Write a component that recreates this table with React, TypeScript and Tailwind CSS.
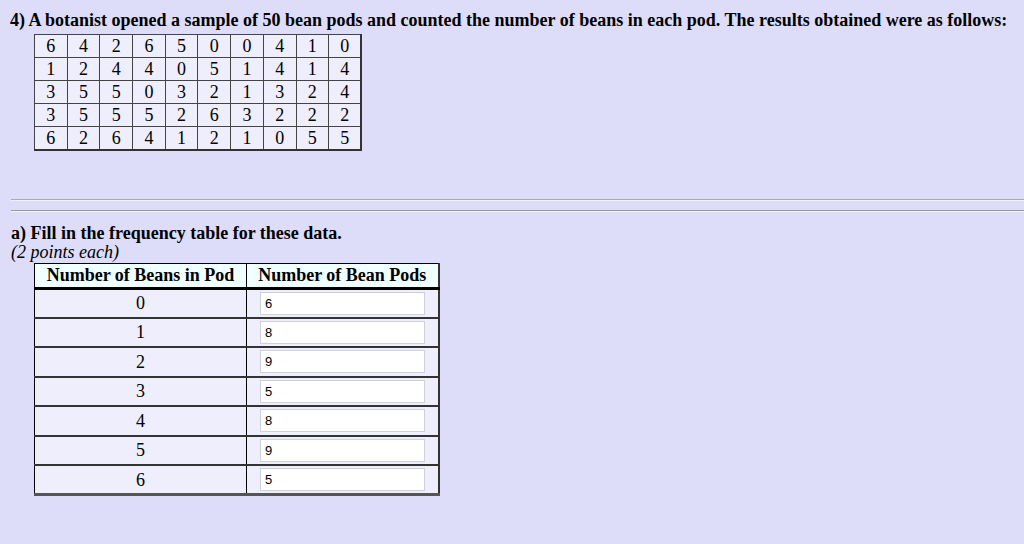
const data = [
  [6, 4, 2, 6, 5, 0, 0, 4, 1, 0],
  [1, 2, 4, 4, 0, 5, 1, 4, 1, 4],
  [3, 5, 5, 0, 3, 2, 1, 3, 2, 4],
  [3, 5, 5, 5, 2, 6, 3, 2, 2, 2],
  [6, 2, 6, 4, 1, 2, 1, 0, 5, 5],
];

const freq = [
  { beans: 0, pods: "6" },
  { beans: 1, pods: "8" },
  { beans: 2, pods: "9" },
  { beans: 3, pods: "5" },
  { beans: 4, pods: "8" },
  { beans: 5, pods: "9" },
  { beans: 6, pods: "5" },
];

export default function App() {
  return (
    <div className="h-[544px] w-[1024px] overflow-hidden bg-[#DDDDFA] text-black font-['Liberation_Serif',serif]">
      <div className="pl-[10px] pt-[10px] text-[18px] font-bold leading-[20px] whitespace-nowrap">
        4) A botanist opened a sample of 50 bean pods and counted the number of beans in each pod. The results obtained were as follows:
      </div>

      <table className="ml-[34px] mt-[4px] border-collapse border-r-2 border-b-2 border-[#333] bg-[#EEEEFD]">
        <tbody>
          {data.map((row, i) => (
            <tr key={i} className="h-[23px]">
              {row.map((n, j) => (
                <td
                  key={j}
                  className="w-[32.7px] border border-[#444] p-0 text-center text-[18px] leading-[20px]"
                >
                  {n}
                </td>
              ))}
            </tr>
          ))}
        </tbody>
      </table>

      <div className="ml-[11px] mt-[48px] h-[2px] border-t border-b border-t-[#A9A9B8] border-b-[#F2F2F8]" />
      <div className="ml-[11px] mt-[9px] h-[2px] border-t border-b border-t-[#999] border-b-[#F2F2F8]" />

      <div className="pl-[11px] pt-[11px] text-[18px] font-bold leading-[20px]">
        a) Fill in the frequency table for these data.
      </div>
      <div className="pl-[11px] text-[18px] italic leading-[19px]">(2 points each)</div>

      <table className="ml-[34px] mt-[1px] border-collapse border-l border-t border-r-2 border-b-[3px] border-l-black border-t-black border-r-[#333] border-b-[#555]">
        <thead>
          <tr className="h-[25px] bg-[#F0FFFF]">
            <th className="w-[212px] border-r border-b-[3px] border-black p-0 text-center text-[18px] font-bold leading-[20px]">
              Number of Beans in Pod
            </th>
            <th className="w-[192px] border-b-[3px] border-black p-0 text-center text-[18px] font-bold leading-[20px]">
              Number of Bean Pods
            </th>
          </tr>
        </thead>
        <tbody className="bg-[#EEEEFD]">
          {freq.map((r, i) => (
            <tr key={r.beans} className={i < freq.length - 1 ? "h-[29.5px] border-b-2 border-[#333]" : "h-[29.5px]"}>
              <td className="border-r border-black p-0 text-center text-[18px] leading-[20px]">{r.beans}</td>
              <td className="p-0 pl-[13px]">
                <input
                  readOnly
                  value={r.pods}
                  className="block h-[23px] w-[165px] border border-[#D0D0DA] bg-white px-[4px] text-[13px] font-['Liberation_Sans',Arial,sans-serif] outline-none"
                />
              </td>
            </tr>
          ))}
        </tbody>
      </table>
    </div>
  );
}
